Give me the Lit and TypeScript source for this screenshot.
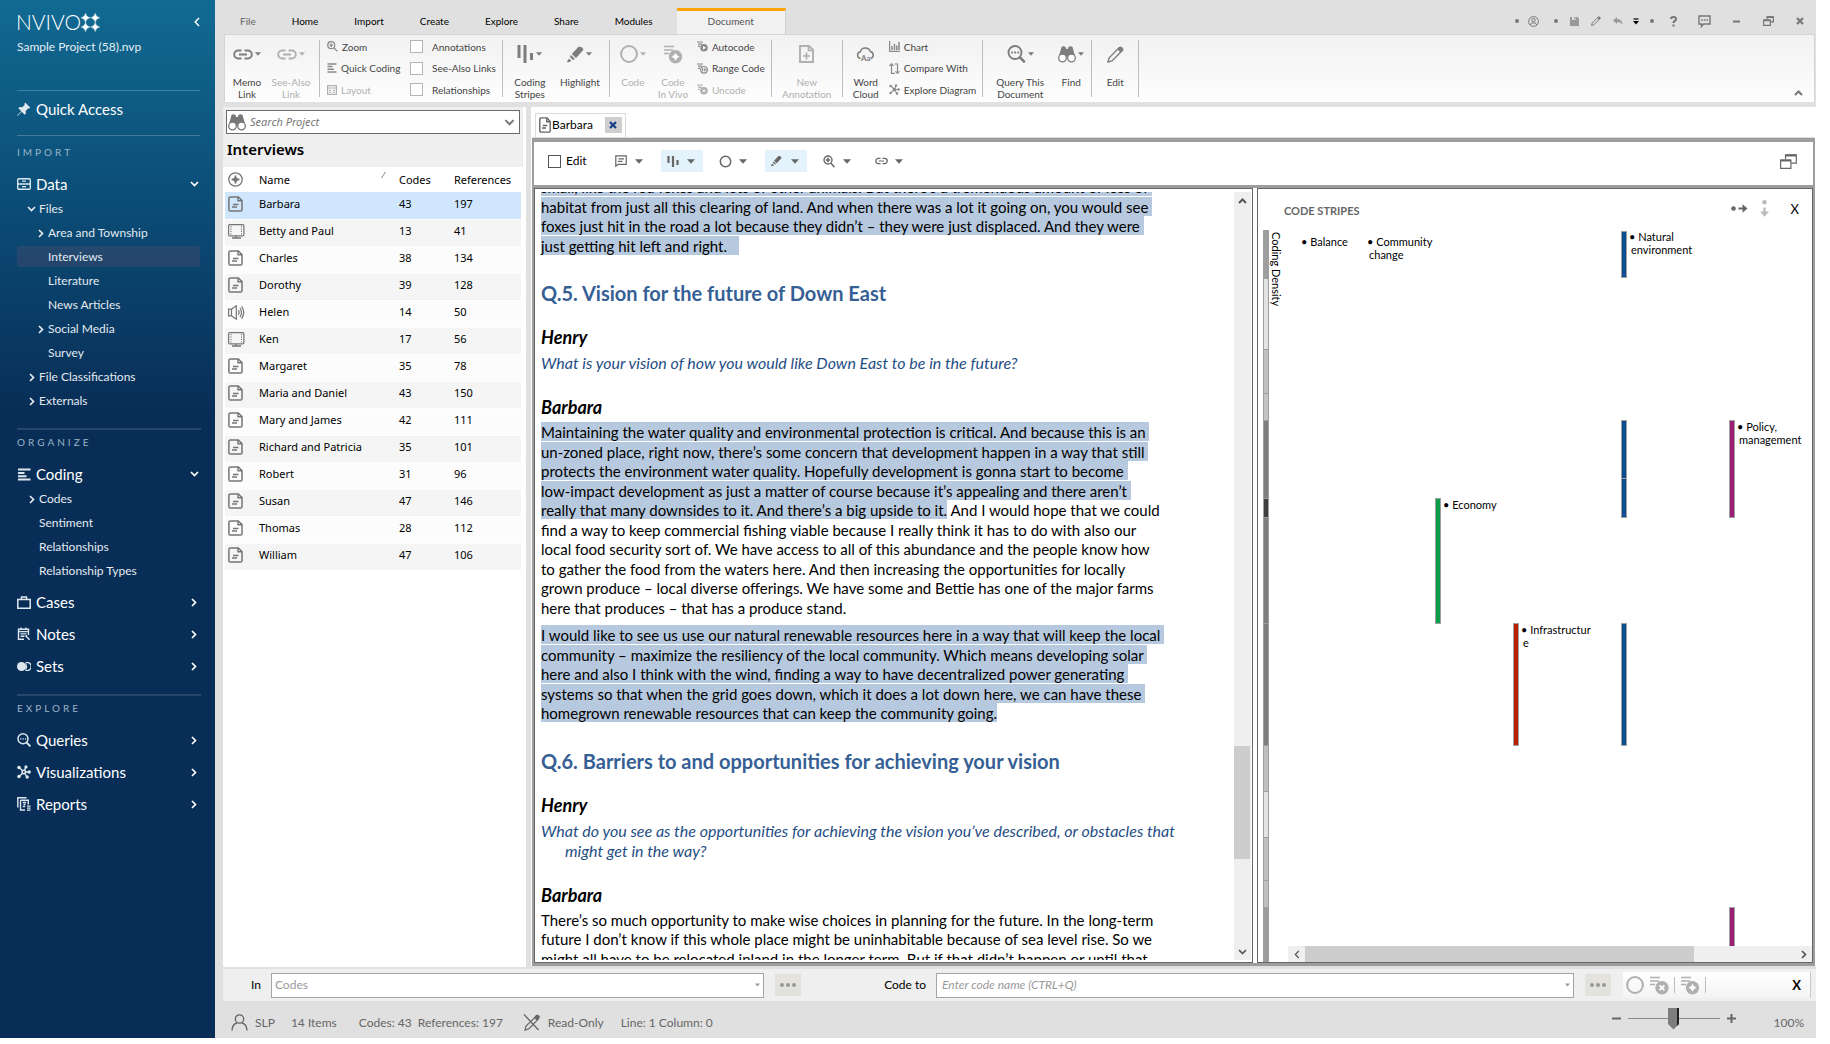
import { LitElement, html, css, svg, nothing } from "lit";
import { customElement } from "lit/decorators.js";
import { classMap } from "lit/directives/class-map.js";

/* ---------- icons ---------- */

const S = (w: number, h: number, vb: string, body: unknown) =>
  html`<svg class="ic" width=${w} height=${h} viewBox=${vb} fill="none" stroke="currentColor" aria-hidden="true">${body}</svg>`;

const chevron = {
  right: (w = 6, h = 9) => S(w, h, "0 0 6 9", svg`<path d="M1 1l3.5 3.5L1 8" stroke-width="1.7"/>`),
  down: (w = 9, h = 6) => S(w, h, "0 0 9 6", svg`<path d="M1 1l3.5 3.5L8 1" stroke-width="1.7"/>`),
  left: (w = 6, h = 10) => S(w, h, "0 0 6 10", svg`<path d="M5 1L1.2 5 5 9" stroke-width="1.5"/>`),
  up: (w = 9, h = 6) => S(w, h, "0 0 9 6", svg`<path d="M1 5l3.5-3.5L8 5" stroke-width="2"/>`),
};
const caret = (w = 7, h = 4) => S(w, h, "0 0 7 4", svg`<path d="M0 0h7L3.5 4z" fill="currentColor" stroke="none"/>`);

const star = "M0-4.6Q.7-.7 4.6 0 .7.7 0 4.6-.7.7-4.6 0-.7-.7 0-4.6z";
const diamond = "M0-4Q.9-.9 4 0 .9.9 0 4-.9.9-4 0-.9-.9 0-4z";

const icons: Record<string, () => unknown> = {
  stars: () => S(19, 19, "0 0 19 19", svg`<g fill="currentColor" stroke-width=".4">
    <path transform="translate(4.5 4.8)" d=${star}/><path transform="translate(14.2 4.8)" d=${star}/>
    <path transform="translate(4.5 14)" d=${star}/><path transform="translate(14.2 14)" d=${star}/></g>`),
  pin: () => S(14, 14, "0 0 14 14", svg`<path d="M8.2.6l5.2 5.2-1.3.8-1-.2-2.4 2.5.2 2.6-1.2 1.2-3-3L.9 13.6l-.6.1.1-.6 3.9-3.8-3-3L2.500 5.100l2.600.200L7.600 2.900l-.200-1z" fill="currentColor" stroke="none"/>`),
  data: () => S(14, 12, "0 0 14 12", svg`<rect x=".7" y=".7" width="12.600" height="10.600" rx="1.200" stroke-width="1.400"/><path d="M1 6h12M5 3.200h4M5 8.600h4" stroke-width="1.300"/>`),
  coding: () => S(14, 13, "0 0 14 13", svg`<path d="M1 1.500h12.500M1 5h6.500M1 8.200h8.500M1 11.600h12.500" stroke-width="2"/>`),
  cases: () => S(14, 13, "0 0 14 13", svg`<path d="M.8 3.500h12.400v8.700H.8zM4.500 3.300V.9h5v2.400" stroke-width="1.500"/>`),
  notes: () => S(14, 14, "0 0 14 14", svg`<path d="M11.500 8V2.200h-10V12.300H7M1.500 4.600h10M3.500 6.900h6M3.500 9.300h4M4 .5v2M9 .5v2M8.600 8.800l4 4M8.600 8.800l1.600 0" stroke-width="1.400"/>`),
  sets: () => S(14, 9, "0 0 14 9", svg`<circle cx="4.500" cy="4.500" r="4.500" fill="currentColor" stroke="none"/><path d="M8.500.9A4 4 0 1 1 8.500 8.100" stroke-width="1.300"/><path d="M8.800 1.500Q10.200 4.500 8.800 7.500" stroke-width="1.200"/>`),
  query: () => S(14, 14, "0 0 14 14", svg`<circle cx="6" cy="5.800" r="5" stroke-width="1.500"/><path d="M9.600 9.500l3.800 3.900" stroke-width="1.900"/><path d="M3.200 5.800h6" stroke-width="1.300" stroke-dasharray="1.300 1.050"/>`),
  network: () => S(14, 14, "0 0 14 14", svg`<path d="M7 7L2.200 2.500M7 7l1.800-5M7 7h5M7 7l3 5M7 7l-5 4.500" stroke-width="1.400"/><g fill="currentColor" stroke="none"><circle cx="6.800" cy="7" r="2.500"/><circle cx="2" cy="2.500" r="1.800"/><circle cx="9" cy="1.900" r="1.600"/><circle cx="12.200" cy="7" r="1.700"/><circle cx="10.200" cy="12" r="1.700"/><circle cx="2" cy="11.500" r="1.800"/></g><circle cx="6.800" cy="7" r=".9" fill="#0a2e57" stroke="none"/>`),
  reports: () => S(14, 14, "0 0 14 14", svg`<path d="M.8 10.500V.8H9.500M3.500 3.200H11.300V7.500M3.500 3.200V13H8" stroke-width="1.400"/><path d="M5.700 5.500h3.500M6.500 7.500h2M5.700 9.500h2.500M10 9.200h3.500M10 11.200h3.500M10 13.200h3.500" stroke-width="1.300"/>`),
  link: () => S(20, 11, "0 0 20 11", svg`<path d="M8.500 1.500H5.200a4 4 0 0 0 0 8H8.500M11.500 1.500h3.300a4 4 0 0 1 0 8H11.500M6 5.500h8" stroke-width="1.900"/>`),
  linkS: () => S(13, 8, "0 0 20 11", svg`<path d="M8.500 1.500H5.200a4 4 0 0 0 0 8H8.500M11.500 1.500h3.300a4 4 0 0 1 0 8H11.500M6 5.500h8" stroke-width="1.900"/>`),
  zoom: () => S(11, 11, "0 0 11 11", svg`<circle cx="4.200" cy="4.200" r="3.500" stroke-width="1.200"/><path d="M6.800 6.800l3.600 3.600M2.500 4.200h3.500M4.200 2.500V6" stroke-width="1.300"/>`),
  quick: () => S(10, 10, "0 0 10 10", svg`<path d="M.5 1h9M.5 3.600h5M.5 6.300h6.500M.5 9h9" stroke-width="1.500"/>`),
  layout: () => S(10, 10, "0 0 10 10", svg`<rect x=".6" y=".6" width="8.800" height="8.800" stroke-width="1.200"/><path d="M.6 3h8.800M2 5.300h2.400M2 7.300h2.400M6 5.300h2M6 7.300h2" stroke-width="1"/>`),
  stripes: () => S(17, 18, "0 0 17 18", svg`<path d="M2 0v13M8 0v18M14.500 8v7" stroke-width="3"/>`),
  stripesS: () => S(12, 12, "0 0 12 12", svg`<path d="M1.500 1v7M6 1v11M10.500 5v5" stroke-width="2.200"/>`),
  marker: () => S(17, 17, "0 0 17 17", svg`<path d="M11.500.800Q16 .5 16.300 4L9 12 4.800 8z" fill="currentColor" stroke="none"/><path d="M4 9l4 4-2 1L2.900 11z" fill="currentColor" stroke="none"/><path d="M2 12.500L4.500 15 1 16.500 0 15.500z" fill="currentColor" stroke="none"/>`),
  markerS: () => S(11, 12, "0 0 17 17", svg`<path d="M11.500.800Q16 .5 16.300 4L9 12 4.800 8z" fill="currentColor" stroke="none"/><path d="M4 9l4 4-2 1L2.900 11z" fill="currentColor" stroke="none"/><path d="M2 12.500L4.500 15 1 16.500 0 15.500z" fill="currentColor" stroke="none"/>`),
  circle: () => S(18, 18, "0 0 18 18", svg`<circle cx="9" cy="9" r="7.900" stroke-width="2"/>`),
  circleS: () => S(13, 13, "0 0 13 13", svg`<circle cx="6.500" cy="6.500" r="5.200" stroke-width="1.500"/>`),
  invivo: () => S(20, 19, "0 0 20 19", svg`<path d="M1 1.500h10M1 5h9M1 8.500h5" stroke-width="1.700"/><circle cx="12.500" cy="11.800" r="6.700" fill="currentColor" stroke="none"/><path transform="translate(12.500 11.800)" d=${diamond} fill="#fff" stroke="none"/>`),
  uncodeL: () => S(20, 19, "0 0 20 19", svg`<path d="M1 1.500h10M1 5h9M1 8.500h5" stroke-width="1.700"/><circle cx="13" cy="11.800" r="6.700" fill="currentColor" stroke="none"/><path d="M10.600 9.400l4.800 4.800M15.400 9.400l-4.800 4.800" stroke="#fff" stroke-width="1.800"/>`),
  autocode: () => S(11, 11, "0 0 11 11", svg`<path d="M0 1h6M1 3.200h4M1 5.400h2" stroke-width="1.200"/><circle cx="7" cy="6.800" r="3.800" fill="currentColor" stroke="none"/><path d="M6 4.900l3 1.900-3 1.900z" fill="#fff" stroke="none"/>`),
  range: () => S(11, 11, "0 0 11 11", svg`<path d="M0 1h6M1 3.200h4M1 5.400h2" stroke-width="1.200"/><circle cx="7" cy="6.800" r="3.300" stroke-width="1.200"/><path d="M5.600 5.200v3.200M7.300 5.200v3.200M8.800 5.600v2.400" stroke-width="1"/>`),
  uncode: () => S(11, 11, "0 0 11 11", svg`<path d="M0 1h6M1 3.200h4M1 5.400h2" stroke-width="1.200"/><circle cx="7" cy="6.800" r="3.800" fill="currentColor" stroke="none"/><path d="M5.600 5.400l2.800 2.800M8.400 5.400L5.600 8.200" stroke="#fff" stroke-width="1"/>`),
  annotation: () => S(15, 18, "0 0 15 18", svg`<path d="M1 1h9l4 4v12H1z" stroke-width="1.900"/><path d="M7.500 7.500v7M4 11h7M9.500 1v4.500H14" stroke-width="1.600"/>`),
  cloud: () => html`<span class="cloud">${S(19, 15, "0 0 19 15", svg`<path d="M4.500 11.500A3.400 3.400 0 0 1 4.300 4.800 5.300 5.300 0 0 1 14.300 4.400 3.700 3.700 0 0 1 14.800 11.500" stroke-width="1.500"/>`)}<b>Aa</b></span>`,
  chart: () => S(11, 11, "0 0 11 11", svg`<path d="M.6 0v10.400H11" stroke-width="1.200"/><path d="M3 9V5M5.500 9V3M7.800 9V4.500M10 9V1" stroke-width="1.500"/>`),
  compare: () => S(11, 11, "0 0 11 11", svg`<path d="M2.500 2v8.400H6M.5 2.800L2.500.8l2 2M8.500 9V1H5.500M6.500 8.400l2 2 2-2" stroke-width="1.200"/>`),
  explore: () => S(11, 11, "0 0 14 14", svg`<path d="M7 7L2.200 2.500M7 7l1.800-5M7 7h5M7 7l3 5M7 7l-5 4.500" stroke-width="1.400"/><g fill="currentColor" stroke="none"><circle cx="6.800" cy="7" r="2.200"/><circle cx="2" cy="2.500" r="1.600"/><circle cx="9" cy="1.900" r="1.500"/><circle cx="12.200" cy="7" r="1.600"/><circle cx="10.200" cy="12" r="1.600"/><circle cx="2" cy="11.500" r="1.600"/></g>`),
  queryL: () => S(19, 18, "0 0 19 18", svg`<circle cx="8" cy="7.500" r="6.500" stroke-width="1.900"/><path d="M12.600 12l5.200 5.300" stroke-width="2.600"/><path d="M4.200 7.500h8" stroke-width="1.800" stroke-dasharray="1.800 1.300"/>`),
  binoc: () => S(18, 17, "0 0 18 17", svg`<path d="M3.500 1Q5.500-.5 7.500 1L8.200 3H9.800L10.500 1Q12.500-.5 14.500 1L17 10 10 11H8L1 10z" fill="currentColor" stroke="none"/><circle cx="4.500" cy="12" r="3.800" fill="#fff" stroke-width="1.300"/><circle cx="13.500" cy="12" r="3.800" fill="#fff" stroke-width="1.300"/>`),
  pencil: () => S(17, 17, "0 0 17 17", svg`<path d="M1 16l1-4L12.300 1.600Q13.500.600 14.900 1.900 16.300 3.300 15.300 4.500L5 14.900z" stroke-width="1.400"/><path d="M10.500 3.500l3 3 2-2.300Q15.800 2.500 14.300 1.600 12.800 1 12.300 1.700z" fill="currentColor" stroke="none"/>`),
  pencilS: () => S(10, 10, "0 0 17 17", svg`<path d="M1 16l1-4L12.300 1.600Q13.500.600 14.900 1.900 16.300 3.300 15.300 4.500L5 14.900z" stroke-width="1.600"/><path d="M10.500 3.500l3 3 2-2.300Q15.800 2.500 14.300 1.600z" fill="currentColor" stroke="none"/>`),
  dot: () => S(4, 4, "0 0 4 4", svg`<circle cx="2" cy="2" r="2" fill="currentColor" stroke="none"/>`),
  user: () => S(11, 11, "0 0 11 11", svg`<circle cx="5.500" cy="5.500" r="4.900" stroke-width="1"/><circle cx="5.500" cy="4.200" r="1.700" stroke-width="1"/><path d="M2.300 9Q2.800 6.800 5.500 6.800T8.700 9" stroke-width="1"/>`),
  save: () => S(9, 9, "0 0 9 9", svg`<path d="M0 0h7.500L9 1.500V9H0z" fill="currentColor" stroke="none"/><path d="M2 0h4v3H2z" fill="#e0e0e0" stroke="none"/><path d="M4.200 0h1.300v2.500H4.200z" fill="currentColor" stroke="none"/>`),
  undo: () => S(10, 8, "0 0 10 8", svg`<path d="M4 0v2q5 0 5.800 6Q8 5 4 5v2L0 3.500z" fill="currentColor" stroke="none"/>`),
  custom: () => S(6, 7, "0 0 6 7", svg`<path d="M.5 1h5" stroke-width="1.200"/><path d="M0 3h6L3 6.500z" fill="currentColor" stroke="none"/>`),
  help: () => S(7, 11, "0 0 7 11", svg`<path d="M1 3Q1 1 3.500 1T6 3Q6 4.300 4.700 5T3.500 7" stroke-width="2"/><path d="M2.400 8.500h2.200v2H2.400z" fill="currentColor" stroke="none"/>`),
  speech: () => S(13, 13, "0 0 13 13", svg`<path d="M1 1h11v8H5.500L3.500 11.500V9H1z" stroke-width="1.400"/><path d="M3.200 5h6.800" stroke-width="1.500" stroke-dasharray="1.600 1"/>`),
  min: () => S(7, 3, "0 0 7 3", svg`<path d="M0 1.500h7" stroke-width="2"/>`),
  restore: () => S(11, 10, "0 0 11 10", svg`<path d="M4 3.500V.8h6.400v5H7.500" stroke-width="1.200"/><path d="M4 1.200h6.400M.6 4.400H7.400" stroke-width="1.800"/><path d="M.6 4h6.800v5.400H.6z" stroke-width="1.200"/>`),
  restoreL: () => S(17, 15, "0 0 17 15", svg`<path d="M5.500 5V.8h10.800v8.400h-5" stroke-width="1.200"/><path d="M5.500 1.500h10.800M.6 6.500h10.300" stroke-width="2"/><path d="M.6 6h10.300v8.300H.6z" stroke-width="1.200"/>`),
  close: () => S(8, 8, "0 0 8 8", svg`<path d="M1 1l6 6M7 1L1 7" stroke-width="2.200"/>`),
  add: () => S(15, 15, "0 0 15 15", svg`<circle cx="7.500" cy="7.500" r="6.700" stroke-width="1.300"/><path d="M7.500 3.600v7.800M3.600 7.500h7.800" stroke-width="1.800"/><path d="M7.500 4.500L10.500 7.500 7.500 10.500 4.500 7.500z" fill="currentColor" stroke="none"/>`),
  doc: () => S(15, 16, "0 0 15 16", svg`<path d="M2.500.900h7.800L14 4.500v9.300q0 1.300-1.300 1.300H2.200Q.9 15.100.9 13.800V2.200Q.9.900 2.500.900z" stroke-width="1.500"/><path d="M10 1v3.800h4M5 8.500h5.500M4 11h5" stroke-width="1.400"/>`),
  docTab: () => S(12, 16, "0 0 12 16", svg`<path d="M2 .900h6L11.200 4.500v9.300q0 1.300-1.200 1.300H2Q.8 15.100.8 13.800V2.200Q.8.900 2 .900z" stroke-width="1.400"/><path d="M7.800 1v3.800h3.200M3.800 8.500h4.500M3 11h4" stroke-width="1.400"/>`),
  video: () => S(17, 15, "0 0 17 15", svg`<rect x=".6" y=".6" width="15.300" height="11.300" rx="1.200" stroke-width="1.200"/><path d="M3 2v9M13.500 2v9" stroke-width="1" stroke-dasharray="1.200 1.200"/><path d="M4 14h9M8.300 12v2" stroke-width="1.300"/>`),
  audio: () => S(17, 15, "0 0 17 15", svg`<path d="M.6 4.200H3.500v6.600H.6zM3.500 4.200L8.300.8v13.400L3.500 10.800" stroke-width="1.200"/><path d="M10.300 5.200q1.700 2.300 0 4.600M12 3q3 4.500 0 9M13.600 1.300q4.300 6.200 0 12.400" stroke-width="1.200"/>`),
  note: () => S(12, 12, "0 0 12 12", svg`<path d="M.8.8h10.400v8.500H3L.8 11.300zM3.500 3.800h5.500M3 6.300h4.500" stroke-width="1.200"/>`),
  zoomIn: () => S(12, 13, "0 0 12 13", svg`<circle cx="5" cy="5" r="4" stroke-width="1.300"/><path d="M7.800 8l3.700 4.300M2.800 5h4.400M5 2.800v4.400" stroke-width="1.500"/>`),
  right: () => S(17, 9, "0 0 17 9", svg`<g fill="currentColor" stroke="none"><circle cx="2.500" cy="4.500" r="2.300"/><path d="M7.500 3.400h4V.3L16.500 4.500 11.500 8.700V5.600h-4z"/></g>`),
  down: () => S(9, 17, "0 0 9 17", svg`<g fill="currentColor" stroke="none"><circle cx="4.500" cy="2.300" r="2.300"/><path d="M3.300 7.500v4H0L4.500 16.800 9 11.500H5.700v-4z"/></g>`),
  person: () => S(17, 17, "0 0 17 17", svg`<circle cx="8.500" cy="5" r="4.200" stroke-width="1.300"/><path d="M1 16.500Q1.200 10.300 6 9M16 16.500Q15.800 10.300 11 9" stroke-width="1.400"/>`),
  readonly: () => S(17, 17, "0 0 17 17", svg`<path d="M2 16l1-4L12.800 2.600l2.500 2.500L6 14.700z" stroke-width="1.200"/><path d="M11 3.500l2-2.500q2-1 3.300.8T16 4.500L13.500 6.500z" fill="currentColor" stroke="none"/><path d="M1 .5L15.500 16" stroke-width="1.300"/>`),
};
const ic = (n: string) => icons[n]();

/* ---------- data ---------- */

interface Sub { label: string; lvl: 1 | 2; open?: boolean; more?: boolean; on?: boolean }
interface Item { label: string; icon: string; open?: boolean; subs?: Sub[] }
const nav: { title: string; items: Item[] }[] = [
  { title: "IMPORT", items: [{ label: "Data", icon: "data", open: true, subs: [
    { label: "Files", lvl: 1, open: true },
    { label: "Area and Township", lvl: 2, more: true },
    { label: "Interviews", lvl: 2, on: true },
    { label: "Literature", lvl: 2 },
    { label: "News Articles", lvl: 2 },
    { label: "Social Media", lvl: 2, more: true },
    { label: "Survey", lvl: 2 },
    { label: "File Classifications", lvl: 1, more: true },
    { label: "Externals", lvl: 1, more: true },
  ] }] },
  { title: "ORGANIZE", items: [
    { label: "Coding", icon: "coding", open: true, subs: [
      { label: "Codes", lvl: 1, more: true },
      { label: "Sentiment", lvl: 1 },
      { label: "Relationships", lvl: 1 },
      { label: "Relationship Types", lvl: 1 },
    ] },
    { label: "Cases", icon: "cases" },
    { label: "Notes", icon: "notes" },
    { label: "Sets", icon: "sets" },
  ] },
  { title: "EXPLORE", items: [
    { label: "Queries", icon: "query" },
    { label: "Visualizations", icon: "network" },
    { label: "Reports", icon: "reports" },
  ] },
];

const rows: [string, string, number, number][] = [
  ["doc", "Barbara", 43, 197], ["video", "Betty and Paul", 13, 41], ["doc", "Charles", 38, 134],
  ["doc", "Dorothy", 39, 128], ["audio", "Helen", 14, 50], ["video", "Ken", 17, 56],
  ["doc", "Margaret", 35, 78], ["doc", "Maria and Daniel", 43, 150], ["doc", "Mary and James", 42, 111],
  ["doc", "Richard and Patricia", 35, 101], ["doc", "Robert", 31, 96], ["doc", "Susan", 47, 146],
  ["doc", "Thomas", 28, 112], ["doc", "William", 47, 106],
];

const density: [number, string][] = [
  [48, "#9e9e9e"], [71, "#e3e3e3"], [44, "#c0c0c0"], [27, "#c4c4c4"], [78, "#7f7f7f"], [19, "#3f3f3f"],
  [106, "#7f7f7f"], [122, "#7f7f7f"], [46, "#bfbfbf"], [46, "#e3e3e3"], [43, "#bfbfbf"], [27, "#bfbfbf"],
];

interface Stripe { x: number; y: number; h: number; color: string }
const blue = "#0b4d91", plum = "#9a1f74", green = "#0b9c4a", red = "#b81f00";
const stripes: Stripe[] = [
  { x: 338, y: 1, h: 47, color: blue }, { x: 338, y: 190, h: 59, color: blue },
  { x: 338, y: 248, h: 40, color: blue }, { x: 338, y: 393, h: 123, color: blue },
  { x: 446, y: 190, h: 98, color: plum }, { x: 446, y: 677, h: 60, color: plum },
  { x: 152, y: 268, h: 126, color: green }, { x: 230, y: 393, h: 123, color: red },
];
const labels: { x: number; y: number; text: string[] }[] = [
  { x: 18, y: 5, text: ["Balance"] }, { x: 84, y: 5, text: ["Community", "change"] },
  { x: 346, y: 0, text: ["Natural", "environment"] }, { x: 454, y: 190, text: ["Policy,", "management"] },
  { x: 160, y: 268, text: ["Economy"] }, { x: 238, y: 393, text: ["Infrastructur", "e"] },
];

/* A transcript line is either plain text or a [coded, plain] pair. */
type Line = string | [string, string];
const opening: Line[] = [
  ["small, like the red foxes and lots of other animals. But there’s a tremendous amount of loss of ", ""],
  ["habitat from just all this clearing of land. And when there was a lot it going on, you would see ", ""],
  ["foxes just hit in the road a lot because they didn’t – they were just displaced. And they were ", ""],
  ["just getting hit left and right.   ", ""],
];
const vision: Line[] = [
  ["Maintaining the water quality and environmental protection is critical. And because this is an ", ""],
  ["un-zoned place, right now, there’s some concern that development happen in a way that still ", ""],
  ["protects the environment water quality. Hopefully development is gonna start to become ", ""],
  ["low-impact development as just a matter of course because it’s appealing and there aren’t ", ""],
  ["really that many downsides to it. And there’s a big upside to it.", " And I would hope that we could"],
  "find a way to keep commercial fishing viable because I really think it has to do with also our",
  "local food security sort of. We have access to all of this abundance and the people know how",
  "to gather the food from the waters here. And then increasing the opportunities for locally",
  "grown produce – local diverse offerings. We have some and Bettie has one of the major farms",
  "here that produces – that has a produce stand.",
];
const energy: Line[] = [
  ["I would like to see us use our natural renewable resources here in a way that will keep the local ", ""],
  ["community – maximize the resiliency of the local community. Which means developing solar ", ""],
  ["here and also I think with the wind, finding a way to have decentralized power generating ", ""],
  ["systems so that when the grid goes down, which it does a lot down here, we can have these ", ""],
  ["homegrown renewable resources that can keep the community going.", ""],
];
const future: Line[] = [
  "There’s so much opportunity to make wise choices in planning for the future. In the long-term",
  "future I don’t know if this whole place might be uninhabitable because of sea level rise. So we",
  "might all have to be relocated inland in the longer term. But if that didn’t happen or until that",
];

@customElement("app-root")
export class AppRoot extends LitElement {
  static styles = css`
    :host { display: block; color: #000; font: 12px/16px Lato, "Liberation Sans", sans-serif; }
    * { box-sizing: border-box; }
    button, input { font: inherit; color: inherit; border: 0; padding: 0; margin: 0; background: none; border-radius: 0; outline: 0; }
    button { cursor: pointer; }
    a { color: inherit; text-decoration: none; }
    p, h1, h2, h3, ul { margin: 0; padding: 0; font-weight: 400; list-style: none; }
    .ic { display: block; flex: none; }
    .app { display: grid; grid-template: minmax(0, 1fr) / 215px minmax(0, 1fr); height: 100vh; padding: 0 14px 6px 0; background: #fff; overflow: hidden; }

    /* sidebar */
    .side { background: linear-gradient(#116a92 0, #0b4d77 200px, #082e57 410px); color: #fff; padding: 12px 14px 0 16px; }
    .brand { display: flex; align-items: center; height: 20px; }
    .brand .name { font-size: 21px; line-height: 20px; font-weight: 300; }
    .brand button { margin-left: auto; padding: 2px 1px; }
    .proj { height: 16px; margin-top: 7px; padding-left: 1px; color: #e6eef4; }
    .quick { display: flex; align-items: center; gap: 5px; height: 46px; margin: 35px 1px 0; border: solid rgba(255,255,255,.22); border-width: 1px 0; padding-bottom: 8px; font-size: 15px; }
    .quick svg { color: #dfe7ee; }
    .sec { border-top: 2px solid rgba(255,255,255,.12); margin: 16px 0 0 1px; }
    .sec:first-of-type { border: 0; margin-top: 4px; }
    .sec h2 { font-size: 10px; line-height: 24px; letter-spacing: 3px; color: #9cb4c6; }
    .major { display: flex; align-items: center; height: 24px; margin-top: 8px; font-size: 15px; }
    .major > svg:first-child { width: 14px; margin-right: 5px; color: #dfe7ee; }
    .major > svg:last-child { margin: 0 4px 0 auto; }
    .major.open > svg:last-child { margin-right: 2px; }
    .sub { display: flex; align-items: center; height: 24px; padding-top: 2px; color: #e3eaf0; }
    .sub i { display: flex; justify-content: flex-end; width: 22px; padding-right: 4px; }
    .sub.open i { padding-right: 3px; }
    .sub.l2 i { width: 31px; }
    .sub.on { position: relative; }
    .sub.on::before { content: ""; position: absolute; inset: 2px 1px 1px 0; background: rgba(120,80,110,.24); border-radius: 2px; }
    .sub span { position: relative; }

    /* window */
    .win { display: flex; flex-direction: column; min-width: 0; min-height: 0; background: #e0e0e0; }
    .top { display: flex; align-items: flex-end; height: 34px; padding-left: 7px; flex: none; }
    .tabs { display: flex; font-size: 10px; }
    .tabs button { height: 26px; padding: 0 18px; }
    .tabs .file { color: #666; }
    .tabs .cur { border-top: 3px solid #ffa400; background: #f1f1f1; color: #555; padding: 0 31px 3px; margin-left: 6px; border-right: 1px solid #d0d0d0; }
    .tools { display: flex; align-items: center; height: 26px; margin-left: auto; color: #777; }
    .tools button, .tools span { display: flex; justify-content: center; }
    .tools .blk { color: #000; }
    .tools .lt { color: #999; }
    .w6 { width: 6px; } .w12 { width: 12px; } .w16 { width: 16px; } .w20 { width: 20px; } .w26 { width: 26px; } .w28 { width: 28px; } .w30 { width: 30px; } .w32 { width: 32px; }
    .ribbon { display: flex; flex: none; height: 68px; margin: 0 1px 0 9px; border: 1px solid #d5d5d5; border-bottom: 0; background: linear-gradient(#f1f1f1, #fefefe); font-size: 10px; line-height: 12px; color: #444; padding: 5px 0; }
    .grp { display: flex; border-right: 1px solid #bdbdbd; padding-right: 6px; }
    .grp.even { padding-right: 0; }
    .big { display: grid; grid-template-rows: 36px 24px; justify-items: center; text-align: center; white-space: nowrap; }
    .big .pic { display: flex; align-items: center; gap: 2px; color: #7d7d7d; height: 28px; }
    .off, .off .pic { color: #b0b0b0; }
    .b28 { width: 28px; } .b34 { width: 34px; } .b44 { width: 44px; } .b46 { width: 46px; } .b54 { width: 54px; } .b70 { width: 70px; } .b74 { width: 74px; }
    .col { display: flex; flex-direction: column; justify-content: space-between; height: 56px; padding-left: 7px; }
    .col button, .col label { display: flex; align-items: center; gap: 4px; height: 13px; white-space: nowrap; }
    .col svg { color: #8a8a8a; }
    .col .off svg { color: #b0b0b0; }
    .col.wide { width: 90px; }
    .col.chk { padding: 0; }
    .col label { gap: 9px; }
    .tight .col { padding-left: 0; }
    input[type="checkbox"] { appearance: none; width: 13px; height: 13px; border: 1px solid #b5b5b5; background: #fff; flex: none; }
    .fold { margin: auto 11px 1px auto; color: #777; }
    .cloud { display: grid; }
    .cloud > * { grid-area: 1 / 1; }
    .cloud b { font-size: 8px; line-height: 8px; align-self: end; justify-self: center; }

    /* body */
    .body { flex: 1; display: grid; grid-template: minmax(0, 1fr) / 303px minmax(0, 1fr); gap: 5px; min-height: 0; margin: 5px 0 2px 8px; }
    .list { background: #fff; font-family: "Noto Sans", sans-serif; font-size: 11px; }
    .head { background: #efefef; margin-right: 3px; padding: 3px; height: 60px; }
    .search { display: flex; align-items: center; height: 24px; border: 1px solid #6b6b6b; background: #fff; padding: 0 4px 0 1px; color: #777; }
    .search input { flex: 1; min-width: 0; font-style: italic; padding-left: 4px; }
    .search input::placeholder, .codebar input::placeholder { color: inherit; opacity: 1; }
    .head h1 { font-size: 15px; line-height: 30px; font-weight: 600; padding-left: 1px; }
    table { border-collapse: collapse; width: 296px; margin-left: 2px; table-layout: fixed; }
    th, td { padding: 0; text-align: left; font-weight: 400; }
    th { height: 25px; }
    td { height: 27px; border-bottom: 1px solid #fff; padding-bottom: 3px; }
    th svg, td svg { color: #757575; margin-left: 3px; }
    tbody tr { background: #fcfcfc; }
    tbody tr:nth-child(even) { background: #f5f5f5; }
    tbody tr.sel { background: #cfe6fd; }
    .c0 { width: 34px; } .c1 { width: 140px; } .c2 { width: 55px; }
    .sort { display: flex; justify-content: space-between; padding-right: 13px; }

    /* document */
    .docs { display: flex; flex-direction: column; min-width: 0; min-height: 0; background: #fff; padding: 0 1px; margin-bottom: 1px; }
    .dtabs { display: flex; flex: none; align-items: flex-end; height: 31px; border-bottom: 1px solid #dcdcdc; padding-left: 3px; }
    .dtab { display: flex; align-items: center; height: 24px; border: 1px solid #dcdcdc; border-bottom: 0; padding: 0 3px 1px 3px; gap: 1px; }
    .dtab button { width: 17px; height: 16px; display: grid; place-items: center; background: #cfcfcf; margin-left: 11px; }
    .dtab svg { color: #666; }
    .dtab button svg { color: #143f8c; }
    .frame { flex: 1; display: flex; flex-direction: column; min-height: 0; border: solid #9d9d9d; border-width: 4px 2px 3px; }
    .bar { display: flex; flex: none; align-items: flex-start; height: 46px; border-bottom: 3px solid #9d9d9d; padding: 8px 16px 0 14px; background: #fff; color: #666; }
    .bar label { display: flex; align-items: center; gap: 5px; height: 22px; color: #000; width: 61px; }
    .bar input { border-color: #555; }
    .bar .set { display: flex; gap: 10px; }
    .bar .set button { display: flex; align-items: center; width: 42px; height: 22px; padding: 0 8px 0 6px; justify-content: space-between; }
    .bar .set .hot { background: #e3f2fb; }
    .bar .pop { margin: 4px 0 0 auto; }
    .panes { flex: 1; display: grid; grid-template: minmax(0, 1fr) / minmax(0, 1fr) 556px; gap: 4px; min-height: 0; background: #fff; }
    .pane { border: 1px solid #666; min-height: 0; min-width: 0; display: flex; }
    .text { flex: 1; overflow: hidden; margin: 3px 0 2px; padding-left: 6px; white-space: nowrap; font-size: 15px; line-height: 1.3; min-width: 0; }
    .text > :first-child { margin-top: -14px; }
    .text h2 { color: #365f95; font-weight: 700; font-size: 20px; line-height: 24px; margin: 25px 0 22px; }
    .text h3 { font-weight: 700; font-style: italic; font-size: 18px; line-height: 20px; }
    .ask { font-style: italic; color: #1f4e85; font-size: 16px; line-height: 20px; margin: 6px 0 24px; }
    .ask .in { padding-left: 24px; }
    .text .para { margin-top: 6px; }
    .text .gap { margin-top: 8px; }
    .ln { white-space: pre; }
    .hl { background: #b7c9de; padding-top: 1px; }
    .vs { display: flex; flex-direction: column; width: 17px; margin: 3px 1px 2px 0; background: #efefef; color: #555; }
    .vs button, .hs button { display: grid; place-items: center; width: 17px; height: 17px; flex: none; }
    .vs .t1 { flex: 537; } .vs .thumb { flex: 113; background: #cdcdcd; margin-right: 1px; } .vs .t2 { flex: 84; }

    .cs { flex-direction: column; }
    .cs header { display: flex; flex: none; align-items: center; height: 41px; padding: 0 13px 2px 26px; color: #666; }
    .cs header b { margin-right: auto; padding-top: 4px; font-size: 11px; }
    .cs header button { display: grid; place-items: center; }
    .cs header .dn { color: #bbb; margin: 0 22px 0 12px; }
    .cs header .x { color: #000; font-size: 13px; }
    .cs .map { flex: 1; display: flex; min-height: 0; padding-left: 5px; font-size: 11px; }
    .dens { width: 6px; display: flex; flex-direction: column; background: #9d9d9d; overflow: hidden; flex: none; }
    .dens div { border: 1px solid #9d9d9d; border-bottom: 0; flex: none; }
    .right { flex: 1; display: flex; flex-direction: column; min-width: 0; min-height: 0; }
    .area { flex: 1; display: flex; min-height: 0; overflow: hidden; }
    .vert { writing-mode: vertical-rl; width: 14px; line-height: 13px; padding-top: 2px; flex: none; }
    .canvas { flex: 1; position: relative; line-height: 13px; }
    .canvas > * { position: absolute; white-space: nowrap; }
    .tag { padding-left: 2px; text-indent: -2px; }
    .stripe { width: 6px; border: 1px solid #a0a0a0; }
    .hs { display: flex; flex: none; height: 16px; margin-left: 19px; background: #efefef; color: #555; }
    .hs .thumb { flex: 389; background: #cdcdcd; } .hs .t2 { flex: 101; }
    .hs button { height: 16px; }

    /* code bar and status */
    .codebar { display: flex; flex: none; align-items: center; height: 32px; background: #efefef; margin-left: 8px; padding: 0 5px 0 28px; }
    .codebar > label { margin-right: 10px; }
    .combo { display: flex; align-items: center; height: 25px; border: 1px solid #a5a5a5; background: #fff; color: #999; padding: 0 3px; }
    .combo input { flex: 1; min-width: 0; }
    .combo.a { flex: 493; } .combo.b { flex: 638; padding-left: 5px; }
    .combo.b input { font-style: italic; }
    .dots { display: flex; align-items: center; justify-content: center; gap: 2px; width: 26px; height: 22px; background: #e3e2dd; color: #999; margin-left: 11px; flex: none; }
    .codebar .to { margin-left: 83px; }
    .mini { display: flex; flex: none; align-items: center; gap: 5px; width: 188px; height: 26px; margin-left: 12px; background: linear-gradient(#fff, #f3f3f3); border-right: 1px solid #c8c8c8; padding-left: 3px; color: #b0b0b0; }
    .mini hr { width: 1px; height: 16px; border: 0; background: #bbb; margin: 0; }
    .mini .x { margin: 0 9px 0 auto; color: #000; font-weight: 700; font-size: 13px; }
    .status { display: flex; flex: none; align-items: center; height: 37px; padding: 6px 12px 0 16px; color: #666; }
    .status span { white-space: pre; }
    .status .s1 { margin: 0 16px 0 7px; } .status .s3 { margin: 0 20px 0 22px; } .status .s4 { margin: 0 17px 0 8px; }
    .slide { display: flex; align-items: center; gap: 7px; margin: 0 38px 8px auto; }
    .slide input { appearance: none; width: 92px; height: 22px; background: linear-gradient(#888, #888) center / 100% 1px no-repeat; }
    .slide input::-webkit-slider-thumb { appearance: none; width: 11px; height: 22px; background: #7d7d7d; border-right: 2px solid #222; clip-path: polygon(0 0, 100% 0, 100% 75%, 50% 100%, 0 75%); }
  `;

  private big(icon: string, lines: string[], cls: string, drop = false) {
    return html`<button class="big ${cls}"><span class="pic">${ic(icon)}${drop ? caret(6, 4) : nothing}</span>
      <span>${lines.map((l, i) => html`${i ? html`<br>` : nothing}${l}`)}</span></button>`;
  }
  private small(icon: string, text: string, off = false) {
    return html`<button class=${off ? "off" : ""}>${ic(icon)}<span>${text}</span></button>`;
  }
  private check(text: string) {
    return html`<label><input type="checkbox">${text}</label>`;
  }
  private lines(list: Line[]) {
    return list.map((l) => typeof l === "string"
      ? html`<div class="ln">${l}</div>`
      : html`<div class="ln"><span class="hl">${l[0]}</span>${l[1]}</div>`);
  }

  private sidebar() {
    return html`<nav class="side">
      <div class="brand"><span class="name">NVIVO</span>${ic("stars")}<button aria-label="Collapse navigation">${chevron.left()}</button></div>
      <p class="proj">Sample Project (58).nvp</p>
      <a class="quick" href="#quick">${ic("pin")}Quick Access</a>
      ${nav.map((s) => html`<section class="sec"><h2>${s.title}</h2>
        ${s.items.map((m) => html`<a href="#${m.label}" class=${classMap({ major: true, open: !!m.open })}>${ic(m.icon)}${m.label}${m.open ? chevron.down() : chevron.right()}</a>
          ${(m.subs ?? []).map((u) => html`<a href="#${u.label}" class=${classMap({ sub: true, l2: u.lvl === 2, on: !!u.on, open: !!u.open })}><i>${u.open ? chevron.down() : u.more ? chevron.right() : nothing}</i><span>${u.label}</span></a>`)}`)}
      </section>`)}
    </nav>`;
  }

  private header() {
    return html`<header class="top">
      <div class="tabs">
        <button class="file">File</button>
        ${["Home", "Import", "Create", "Explore", "Share", "Modules"].map((t) => html`<button>${t}</button>`)}
        <button class="cur">Document</button>
      </div>
      <div class="tools">
        <span class="w6">${ic("dot")}</span><button class="w26" aria-label="Account">${ic("user")}</button>
        <span class="w20">${ic("dot")}</span><button class="w16 lt" aria-label="Save">${ic("save")}</button>
        <button class="w28" aria-label="Edit">${ic("pencilS")}</button><button class="w16 lt" aria-label="Undo">${ic("undo")}</button>
        <button class="w20 blk" aria-label="Customize">${ic("custom")}</button><span class="w12">${ic("dot")}</span>
        <button class="w30" aria-label="Help">${ic("help")}</button><button class="w32" aria-label="Feedback">${ic("speech")}</button>
        <button class="w32" aria-label="Minimize">${ic("min")}</button><button class="w32" aria-label="Restore">${ic("restore")}</button>
        <button class="w32" aria-label="Close">${ic("close")}</button>
      </div>
    </header>
    <div class="ribbon">
      <div class="grp">${this.big("link", ["Memo", "Link"], "b44", true)}${this.big("link", ["See-Also", "Link"], "b44 off", true)}</div>
      <div class="grp">
        <div class="col wide">${this.small("zoom", "Zoom")}${this.small("quick", "Quick Coding")}${this.small("layout", "Layout", true)}</div>
        <div class="col chk">${this.check("Annotations")}${this.check("See-Also Links")}${this.check("Relationships")}</div>
      </div>
      <div class="grp">${this.big("stripes", ["Coding", "Stripes"], "b54", true)}${this.big("marker", ["Highlight"], "b46", true)}</div>
      <div class="grp">${this.big("circle", ["Code"], "b46 off", true)}${this.big("invivo", ["Code", "In Vivo"], "b34 off")}
        <div class="col">${this.small("autocode", "Autocode")}${this.small("range", "Range Code")}${this.small("uncode", "Uncode", true)}</div></div>
      <div class="grp even">${this.big("annotation", ["New", "Annotation"], "b70 off")}</div>
      <div class="grp tight">${this.big("cloud", ["Word", "Cloud"], "b46")}
        <div class="col">${this.small("chart", "Chart")}${this.small("compare", "Compare With")}${this.small("explore", "Explore Diagram")}</div></div>
      <div class="grp">${this.big("queryL", ["Query This", "Document"], "b74", true)}${this.big("binoc", ["Find"], "b28", true)}</div>
      <div class="grp even">${this.big("pencil", ["Edit"], "b46")}</div>
      <button class="fold" aria-label="Collapse ribbon">${chevron.up()}</button>
    </div>`;
  }

  private list() {
    return html`<section class="list">
      <div class="head">
        <div class="search">${ic("binoc")}<input type="text" aria-label="Search Project" placeholder="Search Project"><button aria-label="Search options">${chevron.down(11, 7)}</button></div>
        <h1>Interviews</h1>
      </div>
      <table>
        <thead><tr><th class="c0">${ic("add")}</th><th class="c1"><span class="sort">Name${S(5, 6, "0 0 5 6", svg`<path d="M.5 6L4.500 0" stroke="#888" stroke-width="1"/>`)}</span></th><th class="c2">Codes</th><th>References</th></tr></thead>
        <tbody>${rows.map(([i, n, c, r], k) => html`<tr class=${k ? "" : "sel"}><td>${ic(i)}</td><td>${n}</td><td>${c}</td><td>${r}</td></tr>`)}</tbody>
      </table>
    </section>`;
  }

  private document() {
    const tools: [string, string, boolean][] = [["note", "Annotations", false], ["stripesS", "Coding stripes", true], ["circleS", "Code", false], ["markerS", "Highlight", true], ["zoomIn", "Zoom", false], ["linkS", "Links", false]];
    return html`<section class="docs">
      <div class="dtabs"><div class="dtab">${ic("docTab")}<span>Barbara</span><button aria-label="Close tab">${ic("close")}</button></div></div>
      <div class="frame">
        <div class="bar"><label><input type="checkbox">Edit</label>
          <div class="set">${tools.map(([i, l, hot]) => html`<button aria-label=${l} class=${hot ? "hot" : ""}>${ic(i)}${caret(8, 5)}</button>`)}</div>
          <button class="pop" aria-label="Undock">${ic("restoreL")}</button></div>
        <div class="panes">
          <div class="pane">
            <article class="text">
              <div>${this.lines(opening)}</div>
              <h2>Q.5. Vision for the future of Down East</h2>
              <h3>Henry</h3>
              <div class="ask">What is your vision of how you would like Down East to be in the future?</div>
              <h3>Barbara</h3>
              <div class="para">${this.lines(vision)}</div>
              <div class="gap">${this.lines(energy)}</div>
              <h2>Q.6. Barriers to and opportunities for achieving your vision</h2>
              <h3>Henry</h3>
              <div class="ask">What do you see as the opportunities for achieving the vision you’ve described, or obstacles that<div class="in">might get in the way?</div></div>
              <h3>Barbara</h3>
              <div class="para">${this.lines(future)}</div>
            </article>
            <div class="vs"><button aria-label="Scroll up">${chevron.up()}</button><div class="t1"></div><div class="thumb"></div><div class="t2"></div><button aria-label="Scroll down">${chevron.down()}</button></div>
          </div>
          <div class="pane cs">
            <header><b>CODE STRIPES</b><button aria-label="Next column">${ic("right")}</button><button class="dn" aria-label="Next below">${ic("down")}</button><button class="x" aria-label="Close code stripes">X</button></header>
            <div class="map">
              <div class="dens">${density.map(([h, c]) => html`<div style="height:${h}px;background:${c}"></div>`)}</div>
              <div class="right">
                <div class="area">
                  <div class="vert">Coding Density</div>
                  <div class="canvas">
                    ${stripes.map((s) => html`<div class="stripe" style="left:${s.x}px;top:${s.y}px;height:${s.h}px;background:${s.color}"></div>`)}
                    ${labels.map((l) => html`<div class="tag" style="left:${l.x}px;top:${l.y}px">• ${l.text.map((t, i) => html`${i ? html`<br>` : nothing}${t}`)}</div>`)}
                  </div>
                </div>
                <div class="hs"><button aria-label="Scroll left">${chevron.left(6, 9)}</button><div class="thumb"></div><div class="t2"></div><button aria-label="Scroll right">${chevron.right(6, 9)}</button></div>
              </div>
            </div>
          </div>
        </div>
      </div>
    </section>`;
  }

  private footer() {
    const dots = html`${ic("dot")}${ic("dot")}${ic("dot")}`;
    return html`<div class="codebar">
      <label for="in">In</label><div class="combo a"><input id="in" type="text" placeholder="Codes">${caret(5, 4)}</div><button class="dots" aria-label="Select codes">${dots}</button>
      <label class="to" for="to">Code to</label><div class="combo b"><input id="to" type="text" placeholder="Enter code name (CTRL+Q)">${caret(5, 4)}</div><button class="dots" aria-label="Select code">${dots}</button>
      <div class="mini"><button aria-label="Code">${ic("circle")}</button><button aria-label="Uncode">${ic("uncodeL")}</button><hr><button aria-label="Code in vivo">${ic("invivo")}</button><hr><button class="x" aria-label="Close bar">X</button></div>
    </div>
    <footer class="status">${ic("person")}<span class="s1">SLP</span><span>14 Items</span><span class="s3">Codes: 43  References: 197</span>${ic("readonly")}<span class="s4">Read-Only</span><span>Line: 1 Column: 0</span>
      <div class="slide">${S(9, 9, "0 0 9 9", svg`<path d="M0 4.500h9" stroke-width="2"/>`)}<input type="range" aria-label="Zoom level" value="50">${S(9, 9, "0 0 9 9", svg`<path d="M0 4.500h9M4.500 0v9" stroke-width="2"/>`)}</div><span>100%</span></footer>`;
  }

  render() {
    return html`<div class="app">${this.sidebar()}<main class="win">${this.header()}<div class="body">${this.list()}${this.document()}</div>${this.footer()}</main></div>`;
  }
}
